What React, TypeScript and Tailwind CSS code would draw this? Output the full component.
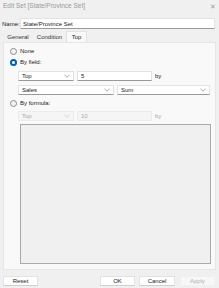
import React from "react";

const font = { fontFamily: '"Liberation Sans", Arial, sans-serif' };

function Chevron({ disabled = false }: { disabled?: boolean }) {
  return (
    <svg width="6" height="4" viewBox="0 0 6 4" className="shrink-0">
      <path d="M0.5 0.8 L3 3.2 L5.5 0.8" fill="none" stroke={disabled ? "#c8c8c8" : "#8a8a8a"} strokeWidth="0.7" />
    </svg>
  );
}

function Select({ label, width, disabled = false }: { label: string; width: string; disabled?: boolean }) {
  return (
    <div
      className={`${width} flex h-[10px] items-center justify-between pl-[3px] pr-[3px] border ${
        disabled ? "bg-[#f5f5f5] border-[#ececec] text-[#a8a8a8]" : "bg-white border-[#e3e3e3] border-b-[#9a9a9a] text-[#1b1b1b]"
      }`}
    >
      <span>{label}</span>
      <Chevron disabled={disabled} />
    </div>
  );
}

function TextBox({ value, width, disabled = false }: { value: string; width: string; disabled?: boolean }) {
  return (
    <div
      className={`${width} flex h-[10px] items-center pl-[3px] border ${
        disabled ? "bg-[#f5f5f5] border-[#ececec] text-[#a8a8a8]" : "bg-white border-[#e3e3e3] border-b-[#9a9a9a] text-[#1b1b1b]"
      }`}
    >
      {value}
    </div>
  );
}

function Radio({ label, checked = false }: { label: string; checked?: boolean }) {
  return (
    <div className="flex h-[8px] items-center gap-[3px]">
      {checked ? (
        <span className="flex h-[7px] w-[7px] items-center justify-center rounded-full bg-[#005fb8]">
          <span className="h-[3px] w-[3px] rounded-full bg-white" />
        </span>
      ) : (
        <span className="h-[7px] w-[7px] rounded-full border border-[#8a8a8a] bg-[#f5f5f5]" />
      )}
      <span>{label}</span>
    </div>
  );
}

function Button({ label, disabled = false, className = "w-[35px]" }: { label: string; disabled?: boolean; className?: string }) {
  return (
    <div
      className={`${className} flex h-[10px] items-center justify-center border ${
        disabled ? "bg-[#f7f7f7] border-[#f0f0f0] text-[#b0b0b0]" : "bg-white border-[#e2e2e2] border-b-[#cfcfcf] text-[#1b1b1b]"
      }`}
    >
      {label}
    </div>
  );
}

export default function App() {
  return (
    <div className="relative h-[288px] w-[219px] overflow-hidden bg-[#f0f0f0] text-[6px] leading-none text-[#1b1b1b]" style={font}>
      {/* title bar */}
      <div className="flex h-[13px] items-center justify-between pl-[3px] pr-[3px]">
        <span className="text-[6.5px] text-[#999999]">Edit Set [State/Province Set]</span>
        <span className="text-[7px] text-[#a0a0a0]">✕</span>
      </div>

      {/* name */}
      <div className="mt-[5px] flex h-[11px] items-center pl-[2px] pr-[4px]">
        <span className="w-[18px]">Name:</span>
        <div className="flex h-[11px] flex-1 items-center border border-[#e3e3e3] border-b-[#9a9a9a] bg-white pl-[2px]">
          State/Province Set
        </div>
      </div>

      {/* tabs */}
      <div className="mt-[2px] flex h-[11px] items-end pl-[3px]">
        <div className="flex h-[10px] w-[30px] items-center justify-center text-[#333]">General</div>
        <div className="flex h-[10px] w-[33px] items-center justify-center text-[#333]">Condition</div>
        <div className="flex h-[11px] w-[21px] items-center justify-center border border-b-0 border-[#e2e2e2] bg-[#f9f9f9]">Top</div>
      </div>

      {/* panel */}
      <div className="mx-[3px] flex flex-col border border-[#e6e6e6] bg-[#f9f9f9] pl-[6px] pb-[5px] pt-[4px]">
        <Radio label="None" />
        <div className="mt-[3px]">
          <Radio label="By field:" checked />
        </div>
        <div className="ml-[8px] mt-[5px] flex items-center">
          <Select label="Top" width="w-[56px]" />
          <div className="ml-[3px]">
            <TextBox value="5" width="w-[75px]" />
          </div>
          <span className="ml-[3px]">by</span>
        </div>
        <div className="ml-[8px] mt-[4px] flex items-center">
          <Select label="Sales" width="w-[96px]" />
          <div className="ml-[3px]">
            <Select label="Sum" width="w-[93px]" />
          </div>
        </div>
        <div className="mt-[4px]">
          <Radio label="By formula:" />
        </div>
        <div className="ml-[8px] mt-[4px] flex items-center">
          <Select label="Top" width="w-[56px]" disabled />
          <div className="ml-[3px]">
            <TextBox value="10" width="w-[75px]" disabled />
          </div>
          <span className="ml-[3px] text-[#a8a8a8]">by</span>
        </div>
        <div className="ml-[10px] mt-[3px] h-[140px] w-[191px] border border-[#a9a9a9] bg-[#f0f0f0]" />
      </div>

      {/* buttons */}
      <div className="mt-[6px] flex items-center pl-[3px] pr-[4px]">
        <Button label="Reset" />
        <Button label="OK" className="ml-auto w-[35px]" />
        <Button label="Cancel" className="ml-[4px] w-[36px]" />
        <Button label="Apply" disabled className="ml-[5px] w-[35px]" />
      </div>
    </div>
  );
}
